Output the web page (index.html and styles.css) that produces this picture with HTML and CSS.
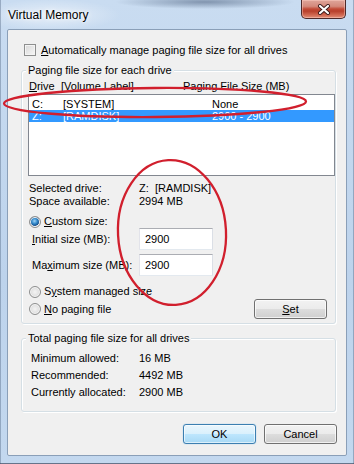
FILE: index.html
```html
<!DOCTYPE html>
<html>
<head>
<meta charset="utf-8">
<title>Virtual Memory</title>
<link rel="stylesheet" href="styles.css">
</head>
<body>
<div class="window">
  <div class="titlebar">
    <span class="title">Virtual Memory</span>
    <div class="close">
      <svg width="14" height="11" viewBox="0 0 14 11">
        <path d="M3 2 L11 9 M11 2 L3 9" stroke="#3a1a1a" stroke-width="4" stroke-linecap="round" fill="none"/>
        <path d="M3 2 L11 9 M11 2 L3 9" stroke="#ffffff" stroke-width="2.2" stroke-linecap="round" fill="none"/>
      </svg>
    </div>
  </div>
  <div class="client">
    <div class="check-row">
      <span class="checkbox"></span>
      <span><u>A</u>utomatically manage paging file size for all drives</span>
    </div>

    <div class="group g1">
      <div class="group-title">Paging file size for each drive</div>
      <div class="lhead">
        <span class="h-drive"><u>D</u>rive</span>
        <span class="h-label">[Volume Label]</span>
        <span>Paging File Size (MB)</span>
      </div>
      <div class="listbox">
        <div class="row">
          <span class="c-drive">C:</span>
          <span class="c-label">[SYSTEM]</span>
          <span>None</span>
        </div>
        <div class="row sel">
          <span class="c-drive">Z:</span>
          <span class="c-label">[RAMDISK]</span>
          <span>2900 - 2900</span>
        </div>
      </div>
      <div class="info">
        <span>Selected drive:</span><span>Z:&nbsp; [RAMDISK]</span>
        <span>Space available:</span><span>2994 MB</span>
      </div>
      <div class="radio-row r-custom">
        <span class="radio on"></span>
        <span><u>C</u>ustom size:</span>
      </div>
      <div class="field f1">
        <span class="flabel"><u>I</u>nitial size (MB):</span>
        <input class="tb" type="text" value="2900">
      </div>
      <div class="field f2">
        <span class="flabel">Ma<u>x</u>imum size (MB):</span>
        <input class="tb" type="text" value="2900">
      </div>
      <div class="radio-row r-system">
        <span class="radio"></span>
        <span>S<u>y</u>stem managed size</span>
      </div>
      <div class="radio-row r-none">
        <span class="radio"></span>
        <span><u>N</u>o paging file</span>
        <button class="btn set"><u>S</u>et</button>
      </div>
    </div>

    <div class="group g2">
      <div class="group-title">Total paging file size for all drives</div>
      <div class="totals">
        <span>Minimum allowed:</span><span>16 MB</span>
        <span>Recommended:</span><span>4492 MB</span>
        <span>Currently allocated:</span><span>2900 MB</span>
      </div>
    </div>

    <div class="buttons">
      <button class="btn default">OK</button>
      <button class="btn">Cancel</button>
    </div>
  </div>

  <svg class="annot" width="354" height="464" viewBox="0 0 354 464">
    <ellipse cx="155" cy="102.5" rx="151" ry="14.5" transform="rotate(-0.4 155 102.5)" fill="none" stroke="#d11f2d" stroke-width="2.3"/>
    <ellipse cx="172" cy="232.5" rx="54" ry="72.5" transform="rotate(-3 172 232.5)" fill="none" stroke="#d11f2d" stroke-width="2.3"/>
  </svg>
</div>
</body>
</html>
```

FILE: styles.css
```css
* { box-sizing: border-box; }

html, body {
  margin: 0;
  padding: 0;
}

body {
  width: 354px;
  height: 464px;
  overflow: hidden;
  font-family: "Liberation Sans", Arial, sans-serif;
  font-size: 11px;
  line-height: 13px;
  color: #000;
  background: #c2d7ee;
}

u { text-decoration: underline; text-underline-offset: 1px; }

.window {
  position: relative;
  width: 354px;
  height: 464px;
  background:
    radial-gradient(ellipse 90px 7px at 205px 2px, rgba(70, 90, 120, 0.55), rgba(70, 90, 120, 0)),
    radial-gradient(ellipse 70px 16px at 50px 15px, rgba(255, 255, 255, 0.55), rgba(255, 255, 255, 0)),
    linear-gradient(#c9dcf1, #bdd3ec 60%, #c3d8ef);
  box-shadow: inset 1px 0 0 rgba(60, 80, 110, 0.35), inset -1px 0 0 rgba(60, 80, 110, 0.35), inset 0 -1px 0 rgba(40, 50, 70, 0.6);
}

/* title bar */
.titlebar {
  height: 29px;
  display: flex;
  align-items: flex-start;
}

.title {
  padding-left: 8px;
  font-size: 12px;
  line-height: 30px;
  color: #000;
  text-shadow: 0 0 6px #fff, 0 0 3px #fff;
}

.close {
  margin-left: auto;
  margin-right: 8px;
  width: 45px;
  height: 19px;
  border: 1px solid #4d2a2a;
  border-top: none;
  border-radius: 0 0 5px 5px;
  background: linear-gradient(#dfa59a 0%, #d48a7c 35%, #c24a36 50%, #b8402c 62%, #d36c55 85%, #e0907a 100%);
  box-shadow: inset 0 0 0 1px rgba(255, 210, 200, 0.45);
  display: flex;
  align-items: center;
  justify-content: center;
}

/* client */
.client {
  margin-left: 7px;
  width: 340px;
  height: 427px;
  border: 1px solid #8a9fb8;
  border-radius: 2px;
  background: #f0f0f0;
  padding-top: 13px;
}

.check-row {
  height: 14px;
  display: flex;
  align-items: center;
  padding-left: 16px;
  gap: 5px;
}

.checkbox {
  width: 12px;
  height: 12px;
  border: 1px solid #8e8f8f;
  background: linear-gradient(135deg, #d8d8d8, #f7f7f7);
  box-shadow: inset 0 0 0 1px #f4f4f4;
  flex: none;
}

/* group boxes */
.group {
  margin-left: 13px;
  width: 315px;
  border: 1px solid #d5dfe5;
  border-radius: 3px;
  box-shadow: inset 1px 1px 0 #fff, 1px 1px 0 #fff;
}

.g1 {
  margin-top: 13px;
  padding-bottom: 4px;
}

.g2 {
  margin-top: 14px;
  padding-bottom: 10px;
}

.group-title {
  width: max-content;
  margin: -7px 0 0 4px;
  padding: 0 2px;
  background: #f0f0f0;
}

.lhead {
  display: flex;
  margin-top: 3px;
  padding-left: 7px;
  height: 13px;
}

.h-drive { width: 32px; }
.h-label { width: 122px; }

.listbox {
  margin: 1px 0 0 6px;
  width: 307px;
  height: 82px;
  border: 1px solid #828790;
  background: #fff;
  padding-top: 3px;
}

.row {
  display: flex;
  height: 12px;
  line-height: 12px;
  padding-left: 3px;
}

.row.sel {
  background: #3399ff;
  color: #fff;
}

.c-drive { width: 31px; }
.c-label { width: 149px; }

.info {
  display: grid;
  grid-template-columns: 110px auto;
  margin-top: 6px;
  padding-left: 7px;
}

.radio-row {
  display: flex;
  align-items: center;
  height: 13px;
  padding-left: 7px;
  gap: 3px;
}

.r-custom { margin-top: 7px; }
.r-system { margin-top: 9px; }
.r-none {
  margin-top: 1px;
  height: 20px;
}

.radio {
  width: 12px;
  height: 12px;
  border-radius: 50%;
  border: 1px solid #8e8f8f;
  background: radial-gradient(circle at 50% 50%, #f4f4f4 0%, #dcdcdc 70%, #cfcfcf 100%);
  box-shadow: inset 0 0 0 1px #f6f6f6;
  flex: none;
}

.radio.on {
  background:
    radial-gradient(circle at 45% 40%, #9fd3f7 0%, #2f86c8 35%, #1a4f8a 58%, #eaeaea 64%, #dcdcdc 100%);
}

.field {
  display: flex;
  align-items: center;
  height: 22px;
  padding-left: 10px;
}

.f2 { margin-top: 4px; }

.flabel { width: 107px; }

.tb {
  width: 74px;
  height: 22px;
  margin: 0;
  padding: 0 0 0 5px;
  font: inherit;
  color: #000;
  background: #fff;
  border: 1px solid;
  border-color: #abadb3 #dbdfe6 #e3e9ef #e2e3ea;
  border-radius: 0;
  outline: none;
}

.btn {
  width: 73px;
  height: 20px;
  margin: 0;
  padding: 0;
  font: inherit;
  color: #000;
  border: 1px solid #707070;
  border-radius: 3px;
  background: linear-gradient(#f2f2f2 0%, #ebebeb 50%, #dddddd 50%, #cfcfcf 100%);
  box-shadow: inset 0 0 0 1px rgba(255, 255, 255, 0.7);
}

.btn.default {
  border-color: #3c7fb1;
  background: linear-gradient(#eaf6fd 0%, #d9f0fc 50%, #bee6fd 50%, #a7d9f5 100%);
  box-shadow: inset 0 0 0 1px rgba(255, 255, 255, 0.6), 0 0 1px #5fb0e6;
}

.set {
  margin-left: auto;
  margin-right: 8px;
}

.totals {
  display: grid;
  grid-template-columns: 108px auto;
  margin-top: 5px;
  padding-left: 9px;
  line-height: 17px;
}

.buttons {
  display: flex;
  justify-content: flex-end;
  gap: 8px;
  margin-top: 12px;
  padding-right: 9px;
}

.annot {
  position: absolute;
  left: 0;
  top: 0;
  pointer-events: none;
}
```
